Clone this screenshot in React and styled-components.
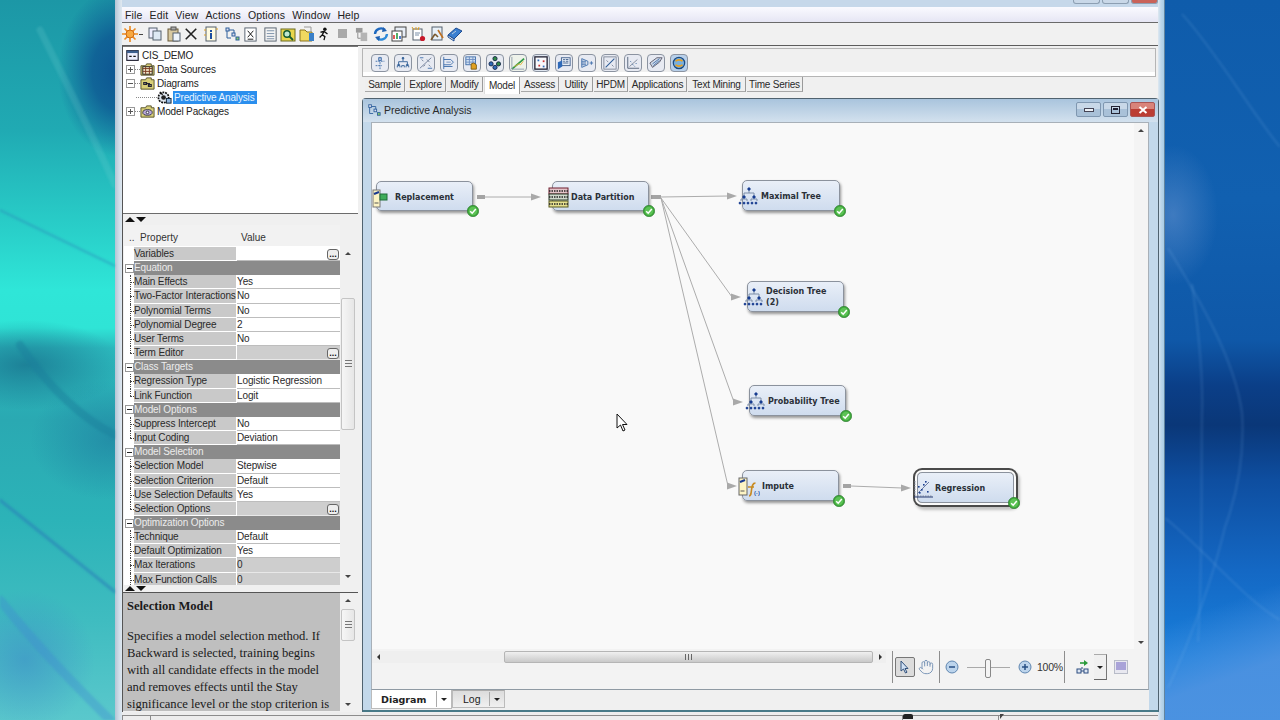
import React from 'react';
import styled, { createGlobalStyle } from 'styled-components';
import { Hand } from 'lucide-react';

const GlobalStyle = createGlobalStyle`
  html, body {
    margin: 0;
    padding: 0;
    height: 720px;
    overflow: hidden;
    background: #1a6fb8;
    font-family: "Liberation Sans", Arial, sans-serif;
    font-size: 10.5px;
    color: #222;
  }
  * { box-sizing: border-box; }
`;

const Desktop = styled.div`
  display: grid;
  grid-template-columns: 115px 1050px 115px;
  width: 1280px;
  height: 720px;
  overflow: hidden;
`;

const LeftWall = styled.div`
  position: relative;
  height: 720px;
  background:
    radial-gradient(ellipse 62px 85px at 120px 72px, #0d5592 0%, rgba(13,85,146,.8) 45%, rgba(13,85,146,0) 100%),
    radial-gradient(ellipse 100px 45px at 25px 365px, rgba(24,112,140,.75), rgba(24,112,140,0)),
    radial-gradient(ellipse 80px 60px at 110px 440px, rgba(30,125,160,.6), rgba(30,125,160,0)),
    radial-gradient(ellipse 70px 70px at 25px 660px, rgba(60,135,200,.55), rgba(60,135,200,0)),
    linear-gradient(180deg, #1c97a6 0, #20aab3 130px, #29cfc9 230px, #2fe6d8 290px, #2fe4d6 328px, #2cbabe 348px, #2aa9b2 420px, #2cb3b8 520px, #3fbcc0 620px, #5ac8cc 720px);
  svg { position: absolute; inset: 0; filter: blur(1.2px); }
`;

const RightWall = styled.div`
  position: relative;
  height: 720px;
  background:
    linear-gradient(160deg, rgba(90,150,225,0) 82%, rgba(90,150,225,.75) 92%),
    radial-gradient(ellipse 45px 70px at 8px 215px, rgba(100,145,205,.55), rgba(100,145,205,0)),
    linear-gradient(180deg, #0f5cab 0, #1160b0 200px, #0f58a8 340px, #0b3f88 385px, #0a3778 425px, #0e4ea0 480px, #1468c4 570px, #1880dc 660px, #1b86e0 720px);
  svg { position: absolute; inset: 0; filter: blur(1.2px); }
`;

const Frame = styled.div`
  width: 1050px;
  height: 720px;
  padding: 0 7px;
  display: flex;
  flex-direction: column;
  background: linear-gradient(90deg, #b4c4d4 0, #cfdce8 4px, #dfe8f0 7px, #dfe8f0 1043px, #bcd6ea 1046px, #a9cde6 1049px, #1d3c56 1050px);
`;

const TitleStrip = styled.div`
  height: 7px;
  display: flex;
  justify-content: flex-end;
  background: #c6d8ea;
`;

const CapButton = styled.div`
  width: 27px;
  height: 4px;
  margin-left: 2px;
  border: 1px solid #8d9fb2;
  border-top: 0;
  border-radius: 0 0 3px 3px;
  background: ${p => (p.$close ? '#c9635a' : '#c9d8e8')};
`;

const MenuBar = styled.div`
  height: 16px;
  padding-left: 3px;
  display: flex;
  align-items: center;
  background: linear-gradient(180deg, #fafaff, #e6e6f4);
  border-bottom: 1px solid #6a6a6a;
`;

const MenuItem = styled.span`
  margin-right: 7px;
  font-size: 10.5px;
  letter-spacing: .15px;
  color: #222;
`;

const ToolBar = styled.div`
  height: 23px;
  display: flex;
  align-items: center;
  background: #f1f1f1;
  border-bottom: 1px solid #5d5d5d;
`;

const ToolSlot = styled.span`
  display: inline-flex;
  justify-content: center;
  flex: none;
  width: ${p => p.$w}px;
  margin-left: ${p => p.$gap}px;
`;

const Body = styled.div`
  flex: 1;
  display: flex;
  min-height: 0;
  background: #f0f0f0;
`;

const LeftColumn = styled.div`
  width: 236px;
  flex: none;
  display: flex;
  flex-direction: column;
  border-left: 1px solid #555;
  background: #f0f0f0;
`;

const TreePanel = styled.div`
  height: 168px;
  padding-top: 1px;
  background: #fff;
  border-top: 1px solid #777;
  border-bottom: 1px solid #6c6c6c;
`;

const TreeRow = styled.div`
  height: 14.2px;
  padding-left: ${p => p.$indent}px;
  display: flex;
  align-items: center;
  position: relative;
  white-space: nowrap;
  font-size: 10px;
  letter-spacing: -.15px;
`;

const Expander = styled.span`
  width: 9px;
  height: 9px;
  flex: none;
  border: 1px solid #999;
  background: #fff;
  position: relative;
  &::before {
    content: '';
    position: absolute;
    left: 1px; right: 1px; top: 3px;
    height: 1px;
    background: ${p => p.$dark ? '#222' : '#555'};
  }
  &::after {
    content: '';
    display: ${p => (p.$open ? 'none' : 'block')};
    position: absolute;
    top: 1px; bottom: 1px; left: 3px;
    width: 1px;
    background: #555;
  }
`;

const TreeDots = styled.span`
  width: ${p => p.$w}px;
  flex: none;
  border-top: 1px dotted #888;
`;

const TreeLabel = styled.span`
  margin-left: ${p => p.$gap ?? 1}px;
  padding: 0 2px 0 1px;
  line-height: 13px;
  color: ${p => (p.$selected ? '#e8f4ff' : '#222')};
  background: ${p => (p.$selected ? '#2b8fee' : 'transparent')};
`;

const Splitter = styled.div`
  height: ${p => p.$h}px;
  flex: none;
  padding: ${p => p.$top}px 0 0 2px;
  display: flex;
  gap: 1px;
  background: #f0f0f0;
`;

const TriUp = styled.span`
  width: 0; height: 0;
  border-left: 5px solid transparent;
  border-right: 5px solid transparent;
  border-bottom: 5px solid #111;
`;

const TriDown = styled(TriUp)`
  border-bottom: 0;
  border-top: 5px solid #111;
`;

const PropsPanel = styled.div`
  height: 360px;
  flex: none;
  display: grid;
  grid-template-columns: 217px 1fr;
  background: #f0f0f0;
`;

const PropsTable = styled.div`
  padding-left: 1px;
  overflow: hidden;
`;

const PropsHeader = styled.div`
  height: 22px;
  display: grid;
  grid-template-columns: 112px 1fr;
  align-items: end;
  padding: 0 0 3px 5px;
  font-size: 10px;
  color: #333;
  background: #f2f2f2;
  border-bottom: 1px solid #fff;
`;

const PropRowWrap = styled.div`
  height: 14.17px;
  display: grid;
  grid-template-columns: 10px 102px 1fr;
  background: #fff;
  overflow: hidden;
  white-space: nowrap;
  font-size: 10px;
  letter-spacing: -.12px;
  line-height: 13px;
`;

const Gutter = styled.div`
  position: relative;
  display: flex;
  align-items: center;
  padding-left: 1px;
  &::before {
    content: '';
    display: ${p => (p.$line ? 'block' : 'none')};
    position: absolute;
    left: 6px;
    top: 0;
    height: ${p => (p.$last ? '7px' : '100%')};
    border-left: 1px dotted #444;
  }
  &::after {
    content: '';
    display: ${p => (p.$line ? 'block' : 'none')};
    position: absolute;
    left: 6px;
    top: 7px;
    width: 4px;
    border-top: 1px dotted #444;
  }
`;

const PropName = styled.div`
  background: #c9c9c9;
  border-bottom: 1px solid #fff;
  color: #2a2a2a;
  overflow: visible;
  position: relative;
  z-index: 1;
`;

const PropValue = styled.div`
  margin-left: 1px;
  position: relative;
  background: ${p => (p.$disabled ? '#cecece' : '#fff')};
  border-bottom: 1px solid ${p => (p.$disabled ? '#e8e8e8' : '#bdbdbd')};
  color: #2a2a2a;
`;

const GroupName = styled.div`
  grid-column: 2 / 4;
  background: #8b8b8b;
  color: #ececec;
`;

const MoreButton = styled.span`
  position: absolute;
  right: 1px;
  top: 2px;
  width: 12px;
  height: 11px;
  border: 1px solid #666;
  border-radius: 3px;
  background: #eee;
  font-size: 9px;
  font-weight: bold;
  letter-spacing: 0;
  line-height: 8px;
  text-align: center;
  color: #111;
`;

const ScrollTrack = styled.div`
  display: flex;
  flex-direction: column;
  align-items: stretch;
  width: 14px;
  margin: ${p => p.$margin};
  background: ${p => p.$pale ? '#f4f4f4' : '#f0f0f0'};
`;

const ScrollArrow = styled.div`
  height: 14px;
  flex: none;
  display: flex;
  align-items: center;
  justify-content: center;
  &::before {
    content: '';
    border-left: 3px solid transparent;
    border-right: 3px solid transparent;
    ${p => (p.$down ? 'border-top: 3px solid #444;' : 'border-bottom: 3px solid #444;')}
  }
`;

const ScrollGap = styled.div`
  flex: ${p => p.$size} 0 0;
`;

const ScrollThumb = styled.div`
  flex: ${p => p.$size} 0 0;
  display: flex;
  align-items: center;
  justify-content: center;
  border: 1px solid #c4c4c4;
  border-radius: 2px;
  background: linear-gradient(90deg, #f6f6f6, #e6e6e6);
  &::before {
    content: '';
    width: 7px;
    height: 7px;
    background: repeating-linear-gradient(180deg, #777 0 1px, transparent 1px 3px);
  }
`;

const HelpPanel = styled.div`
  height: 119px;
  flex: none;
  display: grid;
  grid-template-columns: 217px 1fr;
  border-top: 1px solid #555;
  overflow: hidden;
  background: #f0f0f0;
`;

const HelpText = styled.div`
  padding: 5px 0 0 4px;
  background: #bfbfbf;
  font-family: "Liberation Serif", "Times New Roman", serif;
  font-size: 12.6px;
  line-height: 17px;
  color: #1a1a1a;
  overflow: hidden;
  h4 { margin: 0 0 13px; font-size: 12.6px; line-height: 17px; font-weight: bold; }
  p { margin: 0; white-space: nowrap; }
`;

const RightColumn = styled.div`
  flex: 1;
  min-width: 0;
  padding: 2px 0 0 4px;
  display: flex;
  flex-direction: column;
  background: #f0f0f0;
`;

const PaletteBox = styled.div`
  width: 794px;
  height: 29px;
  padding: 5px 0 0 8px;
  display: flex;
  gap: 5px;
  border: 1px solid #b5b5b5;
  background: linear-gradient(180deg, #f0f0f0 0 23px, #fff 23px);
`;

const PaletteButton = styled.span`
  width: 18px;
  height: 18px;
  flex: none;
  display: flex;
  align-items: center;
  justify-content: center;
  border: 1px solid #8b93a0;
  border-radius: 4px;
  background: ${p => p.$bg || '#e7eaf2'};
`;

const TabRow = styled.div`
  height: 17px;
  padding-left: 3px;
  display: flex;
  align-items: flex-start;
  gap: 1px;
  flex: none;
`;

const Tab = styled.span`
  height: ${p => (p.$active ? '17px' : '15px')};
  width: ${p => p.$w}px;
  text-align: center;
  line-height: ${p => (p.$active ? '18px' : '15px')};
  font-size: 10px;
  letter-spacing: -.2px;
  color: #2a2a2a;
  background: ${p => (p.$active ? '#fff' : '#efefef')};
  border-right: 1px solid #9a9a9a;
  border-bottom: ${p => (p.$active ? '0' : '1px solid #a8a8a8')};
  border-left: ${p => (p.$active ? '1px solid #ddd' : '0')};
`;

const InnerWindow = styled.div`
  flex: 1;
  min-height: 0;
  margin-top: 4px;
  margin-right: -1px;
  display: flex;
  flex-direction: column;
  border: 1px solid #50626f;
  border-bottom: 2px solid #487a88;
  border-radius: 4px 4px 0 0;
  background: #c3d8ea;
`;

const InnerTitle = styled.div`
  height: 23px;
  flex: none;
  display: flex;
  align-items: center;
  padding: 0 3px 2px 4px;
  gap: 3px;
  background: linear-gradient(180deg, #a9c4dd, #d3e1ee);
  font-size: 10.5px;
  color: #2b2b2b;
`;

const WinButtons = styled.div`
  margin-left: auto;
  display: flex;
  gap: 2px;
`;

const WinButton = styled.span`
  width: 25px;
  height: 15px;
  display: flex;
  align-items: center;
  justify-content: center;
  border: 1px solid ${p => (p.$close ? '#a55' : '#7f97b0')};
  border-radius: 2px;
  background: ${p => (p.$close
    ? 'linear-gradient(180deg, #d9837a 0 50%, #bb3d33 50%)'
    : 'linear-gradient(180deg, #c8d8e8 0 50%, #a9c1d8 50%)')};
`;

const InnerBody = styled.div`
  flex: 1;
  min-height: 0;
  margin: 0 9px 0 8px;
  display: flex;
  flex-direction: column;
`;

const CanvasArea = styled.div`
  height: 568px;
  flex: none;
  display: flex;
  flex-direction: column;
  background: #f3f3f3;
  border: 1px solid #a8b0b8;
  border-bottom: 1px solid #8f9aa3;
`;

const ViewportRow = styled.div`
  flex: 1;
  min-height: 0;
  display: flex;
`;

const Viewport = styled.div`
  flex: 1;
  position: relative;
  background: #f9f9f9;
`;

const Connectors = styled.svg`
  position: absolute;
  left: 0;
  top: 0;
`;

const NodeBox = styled.div`
  position: absolute;
  left: ${p => p.$x}px;
  top: ${p => p.$y}px;
  width: ${p => p.$w}px;
  height: ${p => p.$h}px;
  padding: ${p => p.$top}px 0 0 ${p => p.$pad}px;
  display: flex;
  align-items: center;
  border: 1px solid #8b929d;
  border-radius: 5px;
  background: linear-gradient(180deg, #e9eff8, #cfdcee);
  box-shadow: ${p => (p.$selected
    ? '0 0 0 2px #fafafa, 0 0 0 4px #4a4a4a, 2px 3px 3px 4px rgba(0,0,0,.22)'
    : '1px 2px 3px rgba(0,0,0,.4)')};
  font-family: "DejaVu Sans", sans-serif;
  font-size: 8px;
  font-weight: bold;
  line-height: 11px;
  color: #2a3038;
`;

const NodeIcon = styled.span`
  position: absolute;
  left: -5px;
  top: 5px;
  width: 22px;
  height: 22px;
`;

const Badge = styled.span`
  position: absolute;
  right: -7px;
  bottom: -7px;
  width: 12px;
  height: 12px;
  display: flex;
`;

const CursorMark = styled.svg`
  position: absolute;
  left: ${p => p.$x}px;
  top: ${p => p.$y}px;
`;

const BottomBar = styled.div`
  height: 40px;
  flex: none;
  display: flex;
  align-items: flex-start;
  background: #f3f3f3;
`;

const HScroll = styled.div`
  width: 514px;
  height: 12px;
  margin-top: 2px;
  padding: 0 3px 0 5px;
  display: flex;
  align-items: center;
  background: #efefef;
`;

const HArrow = styled.span`
  width: 0;
  height: 0;
  flex: none;
  border-top: 3px solid transparent;
  border-bottom: 3px solid transparent;
  ${p => (p.$right ? 'border-left: 3px solid #333;' : 'border-right: 3px solid #333;')}
`;

const HGap = styled.span`
  width: ${p => p.$w}px;
  flex: none;
`;

const HThumb = styled.div`
  width: 369px;
  height: 12px;
  flex: none;
  display: flex;
  align-items: center;
  justify-content: center;
  border: 1px solid #b5b5b5;
  border-radius: 2px;
  background: linear-gradient(180deg, #f0f0f0, #c9c9c9);
  &::before {
    content: '';
    width: 7px;
    height: 6px;
    background: repeating-linear-gradient(90deg, #666 0 1px, transparent 1px 3px);
  }
`;

const ViewTools = styled.div`
  margin: 2px 0 0 6px;
  height: 32px;
  display: flex;
  align-items: center;
`;

const ToolSep = styled.span`
  width: 1px;
  height: 32px;
  flex: none;
  margin-right: ${p => p.$after}px;
  background: #8d8d8d;
`;

const PointerBtn = styled.span`
  width: 20px;
  height: 20px;
  display: flex;
  align-items: center;
  justify-content: center;
  margin-right: 3px;
  border: 1px solid #777;
  border-radius: 2px;
  background: #dcdcdc;
`;

const HandSlot = styled.span`
  display: flex;
  margin-right: 5px;
  color: #7c97b8;
`;

const ZoomTrack = styled.span`
  width: 43px;
  height: 1px;
  margin: 0 8px;
  position: relative;
  background: #a9a9a9;
  &::after {
    content: '';
    position: absolute;
    left: 18px;
    top: -8px;
    width: 4px;
    height: 17px;
    border: 1px solid #888;
    border-radius: 2px;
    background: #f4f4f4;
  }
`;

const ZoomLabel = styled.span`
  margin: 0 1px 0 5px;
  font-size: 10.5px;
  letter-spacing: -.25px;
  color: #333;
`;

const DropButton = styled.span`
  width: 13px;
  height: 26px;
  margin: 0 7px 0 4px;
  display: flex;
  align-items: center;
  justify-content: center;
  border: 1px solid #aaa;
  border-left: 0;
  border-bottom: 1px solid #666;
  border-right: 1px solid #777;
  background: #f0f0f0;
`;

const SmallDown = styled.span`
  width: 0;
  height: 0;
  border-left: 3px solid transparent;
  border-right: 3px solid transparent;
  border-top: 3px solid #222;
`;

const ViewTabs = styled.div`
  height: 20px;
  flex: none;
  display: flex;
  background: #f0f0f0;
`;

const ViewTab = styled.div`
  width: ${p => p.$w}px;
  height: ${p => (p.$active ? '19px' : '18px')};
  display: flex;
  align-items: center;
  padding: ${p => (p.$active ? '1px 0 0' : '0 0 1px')} ${p => p.$pad}px;
  background: ${p => (p.$active ? '#fff' : 'linear-gradient(180deg, #dcdcdc, #f0f0f0)')};
  border: 1px solid #bbb;
  border-top: ${p => (p.$active ? '0' : '1px solid #aaa')};
  font-family: ${p => (p.$active ? '"DejaVu Sans", sans-serif' : '"Liberation Sans", sans-serif')};
  font-weight: ${p => (p.$active ? 'bold' : 'normal')};
  font-size: ${p => (p.$active ? '9.5px' : '10.5px')};
  color: #222;
  position: relative;
`;

const TabDrop = styled.span`
  position: absolute;
  right: 0;
  top: 1px;
  bottom: 1px;
  width: 15px;
  display: flex;
  align-items: center;
  justify-content: center;
  border-left: 1px solid #aaa;
`;

const StatusBar = styled.div`
  height: 8px;
  flex: none;
  display: flex;
  align-items: flex-start;
  padding-top: 3px;
  background: #ededed;
`;

const StatusCell = styled.span`
  width: ${p => p.$w}px;
  height: 5px;
  flex: none;
  position: relative;
  border-left: 1px solid #8c8c8c;
  border-top: 1px solid #8c8c8c;
`;

const StatusBlob = styled.span`
  position: absolute;
  left: 0;
  top: -2px;
  width: 10px;
  height: 5px;
  background: #222;
  border-radius: 2px 2px 0 0;
`;

const StatusPointer = styled.span`
  position: absolute;
  left: 1px;
  top: -2px;
  border-left: 4px solid #444;
  border-bottom: 5px solid transparent;
`;

/* small drawings */
const Ico = ({ s = 16, children }) => (
  <svg width={s} height={s} viewBox="0 0 16 16" style={{ display: 'block', flex: 'none' }}>{children}</svg>
);

const Doc = ({ x = 3, y = 1, w = 10, h = 14, f = '#fff' }) => (
  <rect x={x} y={y} width={w} height={h} fill={f} stroke="#55606e" />
);

const DiagramGlyph = () => (
  <g fill="none" stroke="#2d5f9c">
    <rect x="2" y="2" width="3" height="3" fill="#dde" />
    <rect x="8" y="7" width="3" height="3" fill="#dde" />
    <rect x="12" y="11" width="3" height="3" fill="#8c6" />
    <path d="M3 5v7h4M5 4h5v3" />
  </g>
);

const SunIcon = () => (
  <Ico>
    <g stroke="#ec8a20" strokeWidth="1.6">
      <path d="M8 0v16M0 8h16M2.5 2.5l11 11M13.5 2.5l-11 11" />
    </g>
    <circle cx="8" cy="8" r="4" fill="#f8a840" stroke="#d06a10" />
  </Ico>
);

const toolbarIcons = [
  { c: 130, w: 16, el: <SunIcon /> },
  { c: 141, w: 5, el: <svg width="5" height="3"><rect y="1" width="4" height="1" fill="#444" /></svg> },
  { c: 155, w: 16, el: <Ico><Doc x={2} y={2} w={8} h={10} f="#eef" /><Doc x={6} y={5} w={8} h={9} f="#dde8f4" /></Ico> },
  { c: 174, w: 16, el: <Ico><rect x="2" y="3" width="10" height="12" fill="#d8c9a0" stroke="#6a5a3a" /><rect x="5" y="1" width="5" height="3" fill="#aaa" stroke="#555" /><Doc x={7} y={7} w={7} h={8} f="#eef4fb" /></Ico> },
  { c: 191, w: 14, el: <Ico s={14}><path d="M2 2l12 12M14 2L2 14" stroke="#222" strokeWidth="1.8" /></Ico> },
  { c: 211, w: 16, el: <Ico><Doc f="#fffbe0" /><path d="M7 4h2v2H7zM7 7h2v6H7z" fill="#1d4ea0" /><path d="M1 4h2M1 9h2M13 3h2" stroke="#e0a020" /></Ico> },
  { c: 232, w: 16, el: <Ico><DiagramGlyph /></Ico> },
  { c: 250, w: 15, el: <Ico s={15}><Doc x={2} y={1} w={12} h={14} /><path d="M5 4l6 7M11 4l-6 7M5 13h6" stroke="#111" /></Ico> },
  { c: 270, w: 15, el: <Ico s={15}><Doc x={2} y={1} w={12} h={14} f="#f4f4f4" /><path d="M4 4h8M4 7h8M4 10h8M4 12.5h8" stroke="#7a8fa8" /></Ico> },
  { c: 288, w: 16, el: <Ico><rect x="1" y="3" width="14" height="12" fill="#e8d64c" stroke="#6a6a20" /><circle cx="7" cy="8" r="3.2" fill="#bfe8d0" stroke="#145a30" strokeWidth="1.4" /><path d="M9 10l4 4" stroke="#145a30" strokeWidth="1.8" /></Ico> },
  { c: 307, w: 16, el: <Ico><path d="M1 4h5l2 2h5v9H1z" fill="#f0d860" stroke="#8a7420" /><rect x="10" y="7" width="5" height="8" fill="#3a80c8" /><path d="M5 1h7v5" stroke="#999" fill="none" /></Ico> },
  { c: 324, w: 14, el: <Ico s={14}><circle cx="9" cy="2.5" r="2" fill="#111" /><path d="M8 5L6 9l3 2-1 4M6 9l-3 3M8 5l4 3M4 6l4-1" stroke="#111" strokeWidth="1.5" fill="none" /></Ico> },
  { c: 343, w: 10, el: <svg width="10" height="10"><rect width="9" height="9" fill="#a9a9a9" /></svg> },
  { c: 362, w: 15, el: <Ico s={15}><rect x="1" y="1" width="7" height="5" fill="#9a9a9a" /><rect x="6" y="6" width="7" height="9" fill="#b4b4b4" /><path d="M3 6v6h3" stroke="#888" fill="none" /></Ico> },
  { c: 381, w: 16, el: <Ico><path d="M2 8a6 6 0 0 1 10-4" stroke="#1f6ac0" strokeWidth="2.4" fill="none" /><path d="M14 8a6 6 0 0 1-10 4" stroke="#2f8ad8" strokeWidth="2.4" fill="none" /><path d="M10 1l4 4-5 1zM6 15l-4-4 5-1z" fill="#1f5fb0" /></Ico> },
  { c: 399, w: 16, el: <Ico><rect x="4" y="1" width="11" height="10" fill="#e8eef6" stroke="#444" /><rect x="1" y="5" width="10" height="10" fill="#fff" stroke="#444" /><path d="M3 13V9" stroke="#d33" strokeWidth="1.6" /><path d="M6 13V7" stroke="#2a9a40" strokeWidth="1.6" /><path d="M9 13v-3" stroke="#2a60c0" strokeWidth="1.6" /></Ico> },
  { c: 418, w: 16, el: <Ico><Doc x={3} y={3} w={9} h={11} /><path d="M2 1l2 3M6 1v3M9 1l-1 3" stroke="#e0a020" /><path d="M5 7h5M5 9h4" stroke="#7a8fa8" /><circle cx="12.5" cy="12.5" r="2.6" fill="#c8182a" /></Ico> },
  { c: 437, w: 16, el: <Ico><Doc x={3} y={1} w={10} h={13} f="#e8f0f8" /><path d="M6 8l-4 6M6 8l3 3" stroke="#7a5a30" strokeWidth="1.6" /><path d="M9 4l5 8" stroke="#c07020" strokeWidth="1.6" /></Ico> },
  { c: 455, w: 16, el: <Ico><path d="M1 9l8-7 6 3-8 8z" fill="#3a7fd0" stroke="#1c4a90" /><path d="M1 9l6 4v2L1 11z" fill="#e6eef8" stroke="#1c4a90" /><path d="M5 8l4-3" stroke="#bcd" /></Ico> },
];

const ComputerIcon = () => (
  <Ico s={13}>
    <rect x="1" y="2" width="14" height="12" fill="#eef" stroke="#223" strokeWidth="1.4" />
    <rect x="1" y="2" width="14" height="3" fill="#3d5f8f" />
    <path d="M4 9h3M9 9h3" stroke="#111" strokeWidth="1.6" />
  </Ico>
);

const FolderBase = ({ children }) => (
  <Ico s={15}>
    <path d="M1 4h5l1-2h5v2h3v10H1z" fill="#d8cf78" stroke="#55512a" />
    {children}
  </Ico>
);

const DataIcon = () => (
  <FolderBase>
    <rect x="3" y="5" width="10" height="8" fill="#f4e8c8" stroke="#222" />
    <path d="M3 7h10M3 10h10M6 5v8M10 5v8" stroke="#7a3a20" />
  </FolderBase>
);

const DiagramsIcon = () => (
  <FolderBase>
    <path d="M4 7h3v2H4zM9 9h3v2H9zM6 8h4v2" fill="none" stroke="#223" strokeWidth="1.2" />
  </FolderBase>
);

const PackageIcon = () => (
  <FolderBase>
    <ellipse cx="8" cy="9" rx="5" ry="3" fill="#b9a8dc" stroke="#334" />
    <circle cx="8" cy="9" r="1.4" fill="#fff" stroke="#334" />
  </FolderBase>
);

const ProcessIcon = () => (
  <Ico s={15}>
    <circle cx="7" cy="8" r="5.5" fill="#dfe6ef" stroke="#111" strokeWidth="1.8" strokeDasharray="2 1" />
    <circle cx="7" cy="8" r="2.5" fill="#222" />
    <rect x="10" y="9" width="5" height="5" fill="#8fb4dc" stroke="#123" />
    <path d="M3 2l3 3" stroke="#111" strokeWidth="1.5" />
  </Ico>
);

const TreeGlyph = ({ c = '#2f5e96' }) => (
  <g stroke={c} fill="none">
    <path d="M8 3v3M3 9V6.5h10V9" />
    <path d="M1.5 13v-2h3v2M6.5 13v-2h3v2M11.5 13v-2h3v2" />
    <circle cx="8" cy="2.5" r="1" fill={c} />
    <circle cx="3" cy="10" r=".9" fill={c} />
    <circle cx="13" cy="10" r=".9" fill={c} />
  </g>
);

const paletteIcons = [
  { el: <Ico s={14}><g stroke="#3a6aa8" fill="#3a6aa8"><path d="M8 1v14M3 6h10M3 11h7" strokeDasharray="2 1" /><rect x="6.5" y="2" width="3" height="3" fill="none" /></g></Ico> },
  { el: <Ico s={14}><TreeGlyph /></Ico> },
  { el: <Ico s={14}><g stroke="#6a7892"><path d="M1 14L14 2M3 4l2 2M11 10l2 2M5 12l2-2M9 4l3 3" /><path d="M1 2h4M10 14h5" stroke="#3a6aa8" /></g></Ico> },
  { el: <Ico s={14}><g stroke="#3a6aa8" fill="none"><path d="M2 1v14M2 4h8l3 3-3 3H2M2 12h10" /><path d="M5 7h5" stroke="#6a8ac0" /></g></Ico> },
  { el: <Ico s={14}><rect x="1" y="1" width="11" height="9" fill="#cfe0f0" stroke="#3a6aa8" /><path d="M1 4h11M1 7h11M5 1v9M9 1v9" stroke="#6a8ac0" /><path d="M7 15V9l3-1 3 2v5z" fill="#e0a020" stroke="#7a5a10" /></Ico> },
  { el: <Ico s={14}><circle cx="8" cy="3" r="2.4" fill="#2f8a45" stroke="#124" /><circle cx="3.5" cy="9" r="2.4" fill="#2f6ab8" stroke="#124" /><circle cx="12" cy="9" r="2.4" fill="#2f8a45" stroke="#124" /><circle cx="8" cy="13" r="2.4" fill="#2f6ab8" stroke="#124" /></Ico> },
  { el: <Ico s={14}><path d="M1 15L15 3" stroke="#2f9a45" strokeWidth="2" /><path d="M1 1v14h14" stroke="#8a97a8" fill="none" /><path d="M4 12l5-3 2 1 3-4" stroke="#e6b030" fill="none" /></Ico>, bg: '#eef2ea' },
  { el: <Ico s={14}><rect x="1" y="1" width="14" height="14" fill="#f8f8fb" stroke="#223" strokeWidth="1.5" /><g fill="#2f6ab8"><rect x="4" y="4" width="2" height="2" /><rect x="10" y="11" width="2" height="2" /></g><g fill="#c83030"><rect x="10" y="5" width="2" height="2" /><rect x="5" y="10" width="2" height="2" /></g></Ico>, bg: '#dfe6f0' },
  { el: <Ico s={14}><rect x="5" y="2" width="10" height="9" fill="#e8eef6" stroke="#3a5a88" /><path d="M7 4h2M10 4h3M7 6h2M10 6h3M7 8h6" stroke="#3a5a88" /><path d="M1 7l5-2v7l-5 3z" fill="#2f6ab8" /></Ico> },
  { el: <Ico s={14}><g stroke="#3a6aa8" fill="none"><path d="M2 3l7 3v4l-7 3z" /><path d="M2 6h5M2 8h5M2 10h5M11 8h4M13 6v4" /></g></Ico> },
  { el: <Ico s={14}><rect x="1" y="1" width="14" height="14" fill="none" stroke="#7a8494" /><path d="M3 13L13 3" stroke="#2f5e96" strokeWidth="1.3" /><path d="M4 5l2 2M10 10l2 2" stroke="#7a8494" /></Ico> },
  { el: <Ico s={14}><path d="M2 1v13h13" stroke="#4a5a70" fill="none" /><path d="M4 12L13 4" stroke="#7a8494" /><path d="M5 6l1 1M9 11l1 1M11 8l1 1M7 9l1 1" stroke="#2f5e96" /></Ico> },
  { el: <Ico s={14}><path d="M1 8L9 2h6l-3 5-8 6z" fill="#d4dce8" stroke="#556" /><path d="M4 9l8-6M5 11l7-6" stroke="#3a6aa8" /></Ico> },
  { el: <Ico s={14}><circle cx="8" cy="8" r="6.5" fill="#7ab0dc" stroke="#1c4a80" strokeWidth="1.4" /><path d="M4 6a5 4 0 0 1 8 0M12 10a5 4 0 0 1-8 0" stroke="#e8a020" strokeWidth="2" fill="none" /></Ico>, bg: '#b8d0ea' },
];

const tabs = [
  ['Sample', 40], ['Explore', 40], ['Modify', 36], ['Model', 36, true], ['Assess', 38],
  ['Utility', 33], ['HPDM', 34], ['Applications', 58], ['Text Mining', 58], ['Time Series', 56],
];

const props = [
  { name: 'Variables', more: true, line: false },
  { group: 'Equation' },
  { name: 'Main Effects', value: 'Yes', line: true },
  { name: 'Two-Factor Interactions', value: 'No', line: true },
  { name: 'Polynomial Terms', value: 'No', line: true },
  { name: 'Polynomial Degree', value: '2', line: true },
  { name: 'User Terms', value: 'No', line: true },
  { name: 'Term Editor', more: true, disabled: true, line: true, last: true },
  { group: 'Class Targets' },
  { name: 'Regression Type', value: 'Logistic Regression', line: true },
  { name: 'Link Function', value: 'Logit', line: true, last: true },
  { group: 'Model Options' },
  { name: 'Suppress Intercept', value: 'No', line: true },
  { name: 'Input Coding', value: 'Deviation', line: true, last: true },
  { group: 'Model Selection' },
  { name: 'Selection Model', value: 'Stepwise', line: true },
  { name: 'Selection Criterion', value: 'Default', line: true },
  { name: 'Use Selection Defaults', value: 'Yes', line: true },
  { name: 'Selection Options', more: true, disabled: true, line: true, last: true },
  { group: 'Optimization Options' },
  { name: 'Technique', value: 'Default', line: true },
  { name: 'Default Optimization', value: 'Yes', line: true },
  { name: 'Max Iterations', value: '0', disabled: true, line: true },
  { name: 'Max Function Calls', value: '0', disabled: true, line: true },
];

const Check = () => (
  <svg width="12" height="12" viewBox="0 0 12 12">
    <circle cx="6" cy="6" r="5.7" fill="#3ea83a" stroke="#26752a" strokeWidth=".6" />
    <circle cx="6" cy="6" r="4.2" fill="#5cc255" />
    <path d="M3.2 6.2l2 2 3.6-4.2" stroke="#fff" strokeWidth="1.5" fill="none" />
  </svg>
);

const ReplaceIcon = () => (
  <svg width="22" height="22" viewBox="0 0 22 22">
    <rect x="1" y="3" width="7" height="17" fill="#fdf4c4" stroke="#777" />
    <path d="M2 7l5-2" stroke="#1a3a90" strokeWidth="2" />
    <path d="M2.5 16h4" stroke="#555" />
    <rect x="8" y="7" width="7" height="6" fill="#3dac5a" stroke="#1e6c38" />
  </svg>
);

const PartitionIcon = () => (
  <svg width="22" height="22" viewBox="0 0 22 22">
    <rect x="1" y="1" width="19" height="6" fill="#e4c4ca" stroke="#702030" />
    <rect x="1" y="7" width="19" height="6" fill="#cfd8cc" stroke="#2a3a2a" />
    <rect x="1" y="14" width="19" height="6" fill="#e6e090" stroke="#5a5a20" />
    <path d="M1 4h19M1 10h19M1 17h19" stroke="#222" strokeDasharray="1.5 1" strokeWidth="1.4" />
  </svg>
);

const NodeTreeIcon = () => (
  <svg width="22" height="22" viewBox="0 0 22 22">
    <g stroke="#7c8ea8" fill="none">
      <path d="M11 4v3M6 11V7h10v4M3 15v-2h6v2M13 15v-2h6v2" />
    </g>
    <g fill="#173c90">
      <path d="M11 1l2 2-2 2-2-2zM6 9l2 2-2 2-2-2zM16 9l2 2-2 2-2-2z" />
      <path d="M2 15.500l1.600 1.600L2 18.700.4 17.100zM6 15.500l1.600 1.600L6 18.700l-1.600-1.600zM10 15.500l1.600 1.600-1.600 1.600-1.600-1.600zM14 15.500l1.600 1.600-1.600 1.600-1.600-1.600zM18 15.500l1.600 1.600-1.600 1.600-1.600-1.600z" />
    </g>
  </svg>
);

const ImputeIcon = () => (
  <svg width="22" height="22" viewBox="0 0 22 22">
    <rect x="1" y="2" width="8" height="17" fill="#fdf4c4" stroke="#666" />
    <path d="M2 6l5-2" stroke="#1a3a90" strokeWidth="2" />
    <path d="M2.5 15h4" stroke="#555" />
    <path d="M11 20c2 0 2-2 2.500-6s1-7 4-7M10 11h6" stroke="#c88a20" strokeWidth="1.6" fill="none" />
    <text x="16" y="19" fontSize="6" fill="#2a5aa8" fontFamily="Liberation Sans">(·)</text>
  </svg>
);

const RegressionIcon = () => (
  <svg width="22" height="22" viewBox="0 0 22 22">
    <path d="M2 3v15h17" stroke="#8a94a8" strokeDasharray="1.500 1" fill="none" />
    <path d="M1 19h19" stroke="#273a70" />
    <path d="M4 16L16 4" stroke="#6a7aa0" />
    <g fill="#1c3f90">
      <rect x="5" y="8" width="1.600" height="1.600" /><rect x="10" y="6" width="1.600" height="1.600" />
      <rect x="8" y="11" width="1.600" height="1.600" /><rect x="14" y="13" width="1.600" height="1.600" />
      <rect x="12" y="3" width="1.600" height="1.600" /><rect x="6" y="14" width="1.600" height="1.600" />
    </g>
  </svg>
);

// viewport origin on the screen, node list uses screen coordinates
const OX = 372;
const OY = 123;

const nodes = [
  { label: 'Replacement', x: 376, y: 181, w: 97, h: 30, pad: 18, top: 3, icon: <ReplaceIcon /> },
  { label: 'Data Partition', x: 552, y: 181, w: 97, h: 30, pad: 18, top: 3, icon: <PartitionIcon /> },
  { label: 'Maximal Tree', x: 742, y: 180, w: 98, h: 31, pad: 18, top: 1, icon: <NodeTreeIcon /> },
  { label: <>Decision Tree<br />(2)</>, x: 747, y: 281, w: 97, h: 31, pad: 18, top: 1, icon: <NodeTreeIcon /> },
  { label: 'Probability Tree', x: 749, y: 385, w: 97, h: 31, pad: 18, top: 1, icon: <NodeTreeIcon /> },
  { label: 'Impute', x: 742, y: 470, w: 97, h: 31, pad: 19, top: 1, icon: <ImputeIcon /> },
  { label: 'Regression', x: 917, y: 472, w: 97, h: 31, pad: 17, top: 1, icon: <RegressionIcon />, selected: true },
];

const links = [
  { from: [485, 197], to: [541, 197], port: [477, 195] },
  { from: [661, 197], to: [737, 196], port: [651, 195] },
  { from: [661, 198], to: [741, 297] },
  { from: [661, 198], to: [743, 402] },
  { from: [661, 198], to: [737, 486] },
  { from: [851, 486], to: [911, 488], port: [843, 484] },
];

function DiagramLinks() {
  return (
    <Connectors width="780" height="530">
      {links.map((l, i) => {
        const tx = l.to[0] - OX;
        const ty = l.to[1] - OY;
        return (
          <g key={i}>
            {l.port && <rect x={l.port[0] - OX} y={l.port[1] - OY} width={l.from[0] - l.port[0]} height="4" fill="#a4a4a4" />}
            <line x1={l.from[0] - OX} y1={l.from[1] - OY} x2={tx - 9} y2={ty} stroke="#acacac" strokeWidth="1" />
            <path d={`M${tx - 10} ${ty - 3.5}L${tx} ${ty}L${tx - 10} ${ty + 3.5}z`} fill="#a9a9a9" />
          </g>
        );
      })}
    </Connectors>
  );
}

function PropRow({ row }) {
  if (row.group) {
    return (
      <PropRowWrap>
        <Gutter><Expander $open $dark /></Gutter>
        <GroupName>{row.group}</GroupName>
      </PropRowWrap>
    );
  }
  return (
    <PropRowWrap>
      <Gutter $line={row.line} $last={row.last} />
      <PropName>{row.name}</PropName>
      <PropValue $disabled={row.disabled}>
        {row.value}
        {row.more && <MoreButton>...</MoreButton>}
      </PropValue>
    </PropRowWrap>
  );
}

function Scrollbar({ margin, before, thumb, after, pale }) {
  return (
    <ScrollTrack $margin={margin} $pale={pale}>
      <ScrollArrow />
      <ScrollGap $size={before} />
      {thumb > 0 && <ScrollThumb $size={thumb} />}
      <ScrollGap $size={after} />
      <ScrollArrow $down />
    </ScrollTrack>
  );
}

export default function App() {
  let right = 0;
  const slots = toolbarIcons.map((t, i) => {
    const left = t.c - 122 - t.w / 2;
    const gap = left - right;
    right = left + t.w;
    return <ToolSlot key={i} $w={t.w} $gap={gap}>{t.el}</ToolSlot>;
  });

  return (
    <>
      <GlobalStyle />
      <Desktop>
        <LeftWall>
          <svg width="115" height="720" viewBox="0 0 115 720">
            <g fill="none" strokeLinecap="round">
              <path d="M0 210L115 266" stroke="#2a88b8" strokeOpacity=".4" strokeWidth="2.500" />
              <path d="M0 500L115 592" stroke="#2a7fb8" strokeOpacity=".55" strokeWidth="3.500" />
              <path d="M40 30C70 90 90 130 115 185" stroke="#7fd8d8" strokeOpacity=".18" strokeWidth="7" />
              <path d="M0 600C40 650 80 690 110 720" stroke="#3f8ad0" strokeOpacity=".35" strokeWidth="9" />
              <path d="M20 345C50 390 85 420 115 435" stroke="#1b7f9c" strokeOpacity=".45" strokeWidth="8" />
            </g>
          </svg>
        </LeftWall>
        <Frame>
          <TitleStrip>
            <CapButton /><CapButton /><CapButton $close />
          </TitleStrip>
          <MenuBar>
            {['File', 'Edit', 'View', 'Actions', 'Options', 'Window', 'Help'].map(m => <MenuItem key={m}>{m}</MenuItem>)}
          </MenuBar>
          <ToolBar>{slots}</ToolBar>
          <Body>
            <LeftColumn>
              <TreePanel>
                <TreeRow $indent={3}><ComputerIcon /><TreeLabel $gap={2}>CIS_DEMO</TreeLabel></TreeRow>
                <TreeRow $indent={3}><Expander /><TreeDots $w={5} /><DataIcon /><TreeLabel>Data Sources</TreeLabel></TreeRow>
                <TreeRow $indent={3}><Expander $open /><TreeDots $w={5} /><DiagramsIcon /><TreeLabel>Diagrams</TreeLabel></TreeRow>
                <TreeRow $indent={13}><TreeDots $w={21} /><ProcessIcon /><TreeLabel $gap={1} $selected>Predictive Analysis</TreeLabel></TreeRow>
                <TreeRow $indent={3}><Expander /><TreeDots $w={5} /><PackageIcon /><TreeLabel>Model Packages</TreeLabel></TreeRow>
              </TreePanel>
              <Splitter $h={11} $top={3}><TriUp /><TriDown /></Splitter>
              <PropsPanel>
                <PropsTable>
                  <PropsHeader><span>.. &nbsp;Property</span><span>Value</span></PropsHeader>
                  {props.map((r, i) => <PropRow key={i} row={r} />)}
                </PropsTable>
                <Scrollbar margin="21px 0 2px 1px" before={38} thumb={131} after={140} />
              </PropsPanel>
              <Splitter $h={7} $top={1}><TriUp /><TriDown /></Splitter>
              <HelpPanel>
                <HelpText>
                  <h4>Selection Model</h4>
                  <p>Specifies a model selection method. If</p>
                  <p>Backward is selected, training begins</p>
                  <p>with all candidate effects in the model</p>
                  <p>and removes effects until the Stay</p>
                  <p>significance level or the stop criterion is</p>
                </HelpText>
                <Scrollbar margin="0 0 0 1px" before={2} thumb={31} after={58} />
              </HelpPanel>
            </LeftColumn>
            <RightColumn>
              <PaletteBox>
                {paletteIcons.map((p, i) => <PaletteButton key={i} $bg={p.bg}>{p.el}</PaletteButton>)}
              </PaletteBox>
              <TabRow>
                {tabs.map(([t, w, on]) => <Tab key={t} $w={w} $active={on}>{t}</Tab>)}
              </TabRow>
              <InnerWindow>
                <InnerTitle>
                  <Ico s={14}><DiagramGlyph /></Ico>
                  <span>Predictive Analysis</span>
                  <WinButtons>
                    <WinButton><svg width="10" height="4"><rect x=".5" y=".5" width="9" height="3" fill="#eef3f8" stroke="#445" /></svg></WinButton>
                    <WinButton><svg width="9" height="8"><rect x=".5" y=".5" width="8" height="7" fill="none" stroke="#223" strokeWidth="1" /><rect x="2" y="2" width="5" height="2" fill="#223" /></svg></WinButton>
                    <WinButton $close><svg width="10" height="8"><path d="M1.500 1l7 6M8.500 1l-7 6" stroke="#fff" strokeWidth="2" /></svg></WinButton>
                  </WinButtons>
                </InnerTitle>
                <InnerBody>
                  <CanvasArea>
                    <ViewportRow>
                      <Viewport>
                        <DiagramLinks />
                        {nodes.map((n, i) => (
                          <NodeBox key={i} $x={n.x - OX} $y={n.y - OY} $w={n.w} $h={n.h} $pad={n.pad} $top={n.top} $selected={n.selected}>
                            <NodeIcon>{n.icon}</NodeIcon>
                            <span>{n.label}</span>
                            <Badge><Check /></Badge>
                          </NodeBox>
                        ))}
                        <CursorMark $x={244} $y={290} width="12" height="20" viewBox="0 0 12 20">
                          <path d="M1 1v14l3.500-3 2.500 6 2-1-2.500-5.500H11z" fill="#fff" stroke="#111" />
                        </CursorMark>
                      </Viewport>
                      <Scrollbar margin="0" before={1} thumb={0} after={1} pale />
                    </ViewportRow>
                    <BottomBar>
                      <HScroll>
                        <HArrow />
                        <HGap $w={124} />
                        <HThumb />
                        <HGap $w={6} />
                        <HArrow $right />
                      </HScroll>
                      <ViewTools>
                        <ToolSep $after={2} />
                        <PointerBtn>
                          <svg width="12" height="14" viewBox="0 0 12 14"><path d="M2 1v10l2.500-2 2 4 1.500-.8-2-3.700H9z" fill="#cfe0f4" stroke="#33527c" /></svg>
                        </PointerBtn>
                        <HandSlot><Hand size={16} strokeWidth={1.5} /></HandSlot>
                        <ToolSep $after={5} />
                        <svg width="14" height="14" viewBox="0 0 14 14"><circle cx="7" cy="7" r="6" fill="#bcd4ec" stroke="#5f86b0" /><path d="M4 7h6" stroke="#274f84" strokeWidth="1.500" /></svg>
                        <ZoomTrack />
                        <svg width="14" height="14" viewBox="0 0 14 14"><circle cx="7" cy="7" r="6" fill="#bcd4ec" stroke="#5f86b0" /><path d="M4 7h6M7 4v6" stroke="#274f84" strokeWidth="1.500" /></svg>
                        <ZoomLabel>100%</ZoomLabel>
                        <ToolSep $after={11} />
                        <svg width="14" height="14" viewBox="0 0 14 14"><path d="M4 3h6" stroke="#2a9a3a" strokeWidth="1.600" /><path d="M8 0l4 3-4 3z" fill="#2a9a3a" /><rect x="1" y="9" width="4" height="4" fill="#dfe8f4" stroke="#2c4c80" /><rect x="8" y="9" width="4" height="4" fill="#dfe8f4" stroke="#2c4c80" /><path d="M5 11h3M6 7v2" stroke="#2c4c80" /></svg>
                        <DropButton><SmallDown /></DropButton>
                        <svg width="14" height="14" viewBox="0 0 14 14"><rect x=".5" y=".5" width="13" height="13" fill="#e8e8f0" stroke="#b8bcc8" /><rect x="2" y="2" width="10" height="8" fill="#a9a3d8" /></svg>
                      </ViewTools>
                    </BottomBar>
                  </CanvasArea>
                  <ViewTabs>
                    <ViewTab $active $w={81} $pad={9}>Diagram<TabDrop><SmallDown /></TabDrop></ViewTab>
                    <ViewTab $w={53} $pad={10}>Log<TabDrop><SmallDown /></TabDrop></ViewTab>
                  </ViewTabs>
                </InnerBody>
              </InnerWindow>
            </RightColumn>
          </Body>
          <StatusBar>
            <StatusCell $w={28} />
            <StatusCell $w={752} />
            <StatusCell $w={96}><StatusBlob /></StatusCell>
            <StatusCell $w={160}><StatusPointer /></StatusCell>
          </StatusBar>
        </Frame>
        <RightWall>
          <svg width="115" height="720" viewBox="0 0 115 720">
            <g fill="none" stroke="#8ab8e8" strokeOpacity=".14" strokeWidth="2.500">
              <path d="M17 14C50 50 85 110 115 147" />
              <path d="M3 248C35 300 70 360 77 413C80 460 70 500 60 527C45 590 25 640 3 688" />
              <path d="M27 284C35 340 38 380 37 413C36 480 38 560 33 642" />
              <path d="M0 518C40 550 80 600 115 620" />
            </g>
          </svg>
        </RightWall>
      </Desktop>
    </>
  );
}
